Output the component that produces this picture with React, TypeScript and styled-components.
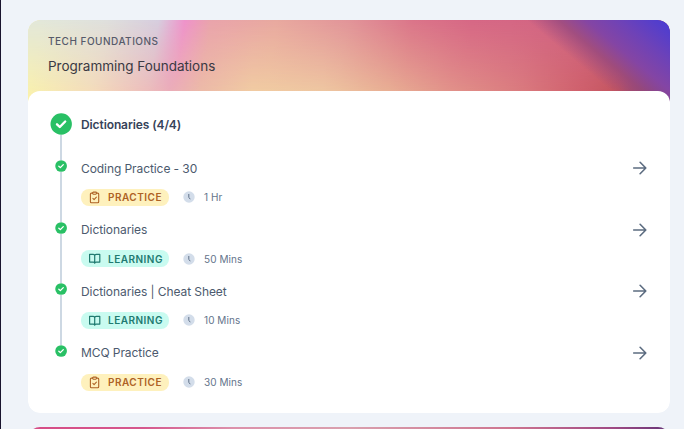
import React from "react";
import styled, { createGlobalStyle } from "styled-components";

const GlobalStyle = createGlobalStyle`
  * {
    box-sizing: border-box;
  }

  body {
    margin: 0;
    overflow: hidden;
    background-color: #eff3f9;
    font-family: Inter, "Liberation Sans", sans-serif;
  }
`;

const Page = styled.main`
  height: 429px;
  overflow: hidden;
  display: flex;
  flex-direction: column;
  gap: 14px;
  padding: 20px 14px 0 27px;
  border-left: 1px solid #19142e;
`;

const Card = styled.section`
  flex: none;
  height: 393px;
  border-radius: 12px;
  overflow: hidden;
`;

const CardHeader = styled.header`
  position: relative;
  height: 82px;
  padding: 14px 20px 0;
  border-radius: 12px 12px 0 0;
  overflow: hidden;
  background: linear-gradient(
    90deg,
    #fbf2ac 0%,
    #f6dcb8 10%,
    #f1c2b9 17%,
    #ebafb8 22%,
    #edbda8 27%,
    #f2cfa3 35%,
    #f0cba2 46%,
    #eab495 56%,
    #e3958a 66%,
    #db7c7e 77%,
    #d0606b 86%,
    #c2525c 92%,
    #8c456a 97%,
    #65408a 100%
  );

  &::before {
    content: "";
    position: absolute;
    inset: 0;
    background: linear-gradient(
      98deg,
      #e2e7d9 2%,
      #dedfdc 12%,
      #d6cdde 20%,
      #ee92ca 24%,
      #e9a3ab 28%,
      #e8a89f 38%,
      #e19499 49%,
      #da7489 59%,
      #d66785 68%,
      #d26583 80%,
      #cb6a7c 100%
    );
    mask-image: linear-gradient(180deg, #000 0%, transparent 95%);
  }

  &::after {
    content: "";
    position: absolute;
    top: 0;
    right: 0;
    width: 150px;
    height: 100%;
    background: linear-gradient(
      40deg,
      rgba(150, 72, 130, 0) 42%,
      rgba(146, 70, 128, 0.75) 55%,
      #8445a4 66%,
      #6d42b8 80%,
      #4f3dcf 96%
    );
  }
`;

const Category = styled.p`
  position: relative;
  z-index: 1;
  margin: 0;
  font-size: 10px;
  line-height: 14px;
  font-weight: 500;
  letter-spacing: 0.5px;
  color: #565a6a;
`;

const CourseTitle = styled.h2`
  position: relative;
  z-index: 1;
  margin: 8px 0 0;
  font-size: 13.5px;
  line-height: 20px;
  font-weight: 400;
  letter-spacing: -0.02px;
  color: #3a3943;
`;

const CardBody = styled.div`
  position: relative;
  z-index: 1;
  height: 322px;
  margin-top: -11px;
  padding: 22px 23px 0 22px;
  border-radius: 12px;
  background-color: #fff;
`;

const TopicHeading = styled.div`
  display: flex;
  align-items: center;
  gap: 9px;
  height: 22px;
`;

const TopicTitle = styled.h3`
  margin: 0;
  font-size: 12px;
  font-weight: 600;
  letter-spacing: -0.1px;
  color: #36435a;
`;

const Rail = styled.div`
  flex: none;
  display: flex;
  flex-direction: column;
  align-items: center;
  width: 22px;
`;

const Connector = styled.div<{ $length?: number }>`
  width: 2px;
  ${({ $length }) => ($length ? `height: ${$length}px;` : "flex: 1;")}
  background-color: #cdd8e3;
`;

const UnitRow = styled.div`
  display: flex;
  gap: 9px;
  height: 61.6px;
`;

const UnitContent = styled.div`
  flex: 1;
`;

const UnitTop = styled.div`
  display: flex;
  align-items: center;
  justify-content: space-between;
  height: 16.2px;
`;

const UnitTitle = styled.h4`
  margin: 0;
  font-size: 12px;
  font-weight: 400;
  letter-spacing: -0.08px;
  color: #4c5a6e;
`;

const Meta = styled.div`
  display: flex;
  align-items: center;
  margin-top: 12.6px;
`;

const Tag = styled.span<{ $kind: UnitKind }>`
  display: flex;
  align-items: center;
  gap: 7px;
  width: 88px;
  height: 17px;
  padding-left: 7px;
  border-radius: 8px;
  font-size: 10px;
  font-weight: 600;
  letter-spacing: 0.5px;
  color: ${({ $kind }) => ($kind === "PRACTICE" ? "#ae6225" : "#217a70")};
  background-color: ${({ $kind }) =>
    $kind === "PRACTICE" ? "#fef1bd" : "#c9fbf0"};
`;

const Duration = styled.span`
  display: flex;
  align-items: center;
  gap: 9px;
  margin-left: 14px;
  font-size: 10px;
  letter-spacing: 0.06px;
  color: #64748b;
`;

const NextHeader = styled.div`
  flex: none;
  height: 80px;
  border-radius: 12px 12px 0 0;
  background: linear-gradient(
    90deg,
    #d64c86 0%,
    #d5578d 18%,
    #dc91ab 32%,
    #d9a0ae 50%,
    #ce7590 75%,
    #a04a84 91%,
    #653477 100%
  );
`;

type UnitKind = "PRACTICE" | "LEARNING";

interface Unit {
  title: string;
  kind: UnitKind;
  duration: string;
}

const units: Unit[] = [
  { title: "Coding Practice - 30", kind: "PRACTICE", duration: "1 Hr" },
  { title: "Dictionaries", kind: "LEARNING", duration: "50 Mins" },
  { title: "Dictionaries | Cheat Sheet", kind: "LEARNING", duration: "10 Mins" },
  { title: "MCQ Practice", kind: "PRACTICE", duration: "30 Mins" },
];

const CheckIcon: React.FC<{ size: number }> = ({ size }) => (
  <svg width={size} height={size} viewBox="0 0 22 22" fill="none">
    <circle cx="11.2" cy="11" r="10.7" fill="#29c065" />
    <path
      d="M7 11.3l2.8 2.7 5.4-5.5"
      stroke="#fff"
      strokeWidth="2.4"
      strokeLinecap="round"
      strokeLinejoin="round"
    />
  </svg>
);

const ClipboardIcon: React.FC = () => (
  <svg
    width="13"
    height="13"
    viewBox="0 0 13 13"
    fill="none"
    stroke="currentColor"
    strokeWidth="1.1"
    strokeLinecap="round"
    strokeLinejoin="round"
  >
    <path d="M4.7 2.1H3.4a1 1 0 0 0-1 1v7.6a1 1 0 0 0 1 1h6.3a1 1 0 0 0 1-1V3.1a1 1 0 0 0-1-1H8.4" />
    <rect x="4.7" y="1.1" width="3.7" height="2.1" rx="0.6" />
    <path d="M4.9 7.4l1.2 1.2 2.3-2.4" />
  </svg>
);

const BookIcon: React.FC = () => (
  <svg
    width="13"
    height="13"
    viewBox="0 0 13 13"
    fill="none"
    stroke="currentColor"
    strokeWidth="1.2"
    strokeLinecap="round"
    strokeLinejoin="round"
  >
    <path d="M6.7 3.8C6.7 2.9 6 2.4 5.2 2.4H1.6v7.7h3.8c.8 0 1.3.5 1.3 1.1 0-.6.5-1.1 1.3-1.1h3.8V2.4H8.2c-.8 0-1.5.5-1.5 1.4zM6.7 3.8v7.2" />
  </svg>
);

const ClockIcon: React.FC = () => (
  <svg width="12" height="12" viewBox="0 0 12 12" fill="none">
    <circle cx="6" cy="6" r="5.7" fill="#d3ddea" />
    <path d="M5.8 3.4v2.9l1.2 1.6" stroke="#607188" strokeLinecap="round" />
  </svg>
);

const ArrowIcon: React.FC = () => (
  <svg
    width="15"
    height="14"
    viewBox="0 0 15 14"
    fill="none"
    stroke="#5c6c80"
    strokeWidth="1.6"
    strokeLinecap="round"
    strokeLinejoin="round"
  >
    <path d="M1.7 7h12M8.1 1.3L13.8 7l-5.7 5.7" />
  </svg>
);

const App: React.FC = () => {
  return (
    <>
      <GlobalStyle />
      <Page>
        <Card>
          <CardHeader>
            <Category>TECH FOUNDATIONS</Category>
            <CourseTitle>Programming Foundations</CourseTitle>
          </CardHeader>
          <CardBody>
            <TopicHeading>
              <CheckIcon size={22} />
              <TopicTitle>Dictionaries (4/4)</TopicTitle>
            </TopicHeading>
            <Rail>
              <Connector $length={25} />
            </Rail>
            {units.map((unit, index) => (
              <UnitRow key={unit.title}>
                <Rail>
                  <CheckIcon size={12} />
                  {index < units.length - 1 && <Connector />}
                </Rail>
                <UnitContent>
                  <UnitTop>
                    <UnitTitle>{unit.title}</UnitTitle>
                    <ArrowIcon />
                  </UnitTop>
                  <Meta>
                    <Tag $kind={unit.kind}>
                      {unit.kind === "PRACTICE" ? (
                        <ClipboardIcon />
                      ) : (
                        <BookIcon />
                      )}
                      {unit.kind}
                    </Tag>
                    <Duration>
                      <ClockIcon />
                      {unit.duration}
                    </Duration>
                  </Meta>
                </UnitContent>
              </UnitRow>
            ))}
          </CardBody>
        </Card>
        <NextHeader />
      </Page>
    </>
  );
};

export default App;
